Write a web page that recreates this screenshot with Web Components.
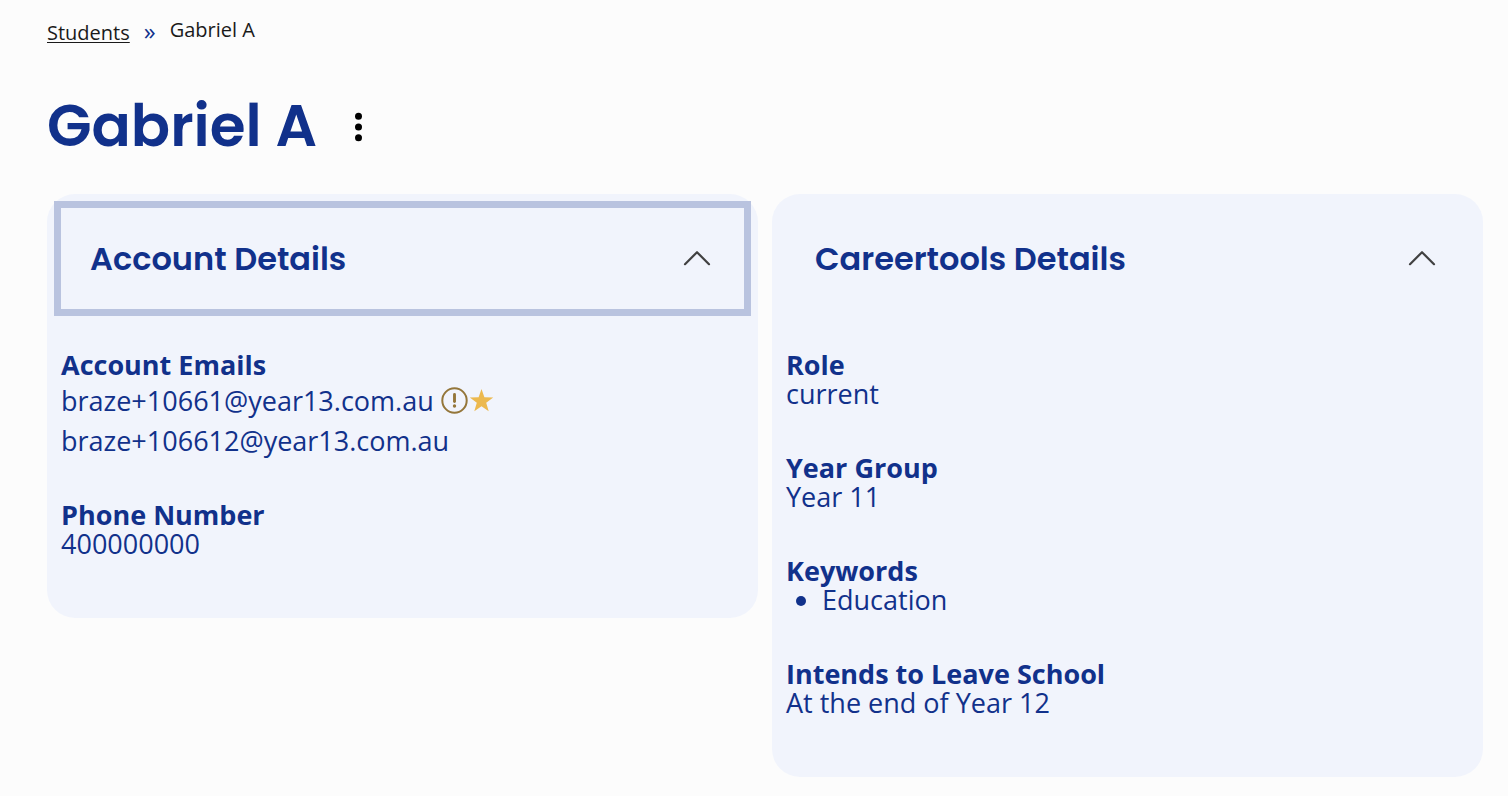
<!DOCTYPE html>
<html lang="en">
<head>
<meta charset="utf-8">
<meta name="viewport" content="width=device-width, initial-scale=1">
<title>Gabriel A</title>
<style>
	:root {
		--navy: #11318b;
		--ink: #1a1a1a;
		--page: #fcfcfc;
		--panel: #f1f4fc;
		--focus: #b9c3df;
		--heading-font: Poppins, Inter, sans-serif;
	}

	body {
		margin: 0;
		padding: 16px 25px 19px 47px;
		background: var(--page);
		color: var(--navy);
		font: 27px/29px "Open Sans", "Noto Sans", sans-serif;
	}

	main {
		display: grid;
		grid-template-columns: repeat(2, minmax(0, 1fr));
		align-items: start;
		gap: 14px;
	}
</style>
</head>
<body>
	<bread-crumbs current="Gabriel A">
		<a href="#students">Students</a>
	</bread-crumbs>

	<page-title>Gabriel A</page-title>

	<main>
		<detail-panel heading="Account Details" active>
			<detail-field label="Account Emails">
				<email-list>
					<email-item unverified primary>braze+10661@year13.com.au</email-item>
					<email-item>braze+106612@year13.com.au</email-item>
				</email-list>
			</detail-field>
			<detail-field label="Phone Number">400000000</detail-field>
		</detail-panel>

		<detail-panel heading="Careertools Details">
			<detail-field label="Role">current</detail-field>
			<detail-field label="Year Group">Year 11</detail-field>
			<detail-field label="Keywords">
				<keyword-list words="Education"></keyword-list>
			</detail-field>
			<detail-field label="Intends to Leave School">At the end of Year 12</detail-field>
		</detail-panel>
	</main>

<script>
(() => {
	const define = (name, template, setup) => {
		customElements.define(name,
			class extends HTMLElement {
				constructor() {
					super();
					this.attachShadow({ mode: 'open' });
					this.shadowRoot.innerHTML = template;
				}

				connectedCallback() {
					if (setup) {
						setup(this, this.shadowRoot);
					}
				}
			}
		);
	};

	define('bread-crumbs', `
		<style>
			:host { display: block; font-size: 20px; }
			ol {
				display: flex;
				align-items: flex-start;
				gap: 14px;
				margin: 0;
				padding: 0;
				list-style: none;
				line-height: 34px;
			}
			::slotted(a) {
				color: var(--ink);
				text-decoration-thickness: 1px;
				text-underline-offset: 2px;
			}
			.separator {
				color: var(--navy);
				font-size: 24px;
				font-weight: 500;
				line-height: 30px;
			}
			.current { color: var(--ink); line-height: 28px; }
		</style>
		<nav aria-label="Breadcrumb">
			<ol>
				<li><slot></slot></li>
				<li class="separator" aria-hidden="true">»</li>
				<li class="current" aria-current="page"></li>
			</ol>
		</nav>
	`, (host, root) => {
		root.querySelector('.current').textContent = host.getAttribute('current');
	});

	define('page-title', `
		<style>
			:host {
				display: flex;
				align-items: center;
				gap: 28px;
				padding: 32px 0 24px;
			}
			h1 {
				margin: 0;
				font: 600 58px/88px var(--heading-font);
			}
			button {
				display: flex;
				padding: 8px;
				border: 0;
				background: none;
				color: #000;
			}
		</style>
		<h1><slot></slot></h1>
		<button type="button" aria-label="More actions">
			<svg width="12" height="32" viewBox="0 0 12 32" fill="currentColor">
				<circle cx="5.5" cy="6.2" r="3.5"></circle>
				<circle cx="5.5" cy="17" r="3.5"></circle>
				<circle cx="5.5" cy="27.8" r="3.5"></circle>
			</svg>
		</button>
	`);

	define('detail-panel', `
		<style>
			:host {
				display: block;
				padding: 7px;
				border-radius: 28px;
				background: var(--panel);
			}
			h2 { margin: 0; }
			button {
				display: flex;
				align-items: center;
				justify-content: space-between;
				width: 100%;
				padding: 28px 33px 28px 29px;
				border: 7px solid transparent;
				background: none;
				color: inherit;
				font: 600 32px/45px var(--heading-font);
				text-align: left;
			}
			:host([active]) button { border-color: var(--focus); }
			svg { color: #414141; }
			.fields {
				display: flex;
				flex-direction: column;
				gap: 45px;
				padding: 34px 7px 53px;
			}
		</style>
		<h2>
			<button type="button" aria-expanded="true" aria-controls="fields">
				<span></span>
				<svg width="28" height="16" viewBox="0 0 28 16" fill="none" stroke="currentColor" stroke-width="2.2" stroke-linecap="round" stroke-linejoin="round">
					<polyline points="2 13.2 14 1.2 26 13.2"></polyline>
				</svg>
			</button>
		</h2>
		<div class="fields" id="fields"><slot></slot></div>
	`, (host, root) => {
		const button = root.querySelector('button');
		const fields = root.querySelector('.fields');
		root.querySelector('span').textContent = host.getAttribute('heading');

		button.onclick = () => {
			const open = button.getAttribute('aria-expanded') === 'true';
			button.setAttribute('aria-expanded', String(!open));
			fields.style.display = open ? 'none' : '';
		};
	});

	define('detail-field', `
		<style>
			:host { display: block; }
			dl, dd { margin: 0; }
			dt { font-weight: 700; }
		</style>
		<dl>
			<dt></dt>
			<dd><slot></slot></dd>
		</dl>
	`, (host, root) => {
		root.querySelector('dt').textContent = host.getAttribute('label');
	});

	define('email-list', `
		<style>
			:host {
				display: flex;
				flex-direction: column;
				gap: 11px;
				padding-top: 7px;
			}
		</style>
		<slot></slot>
	`);

	define('email-item', `
		<style>
			:host { display: flex; align-items: center; }
			svg { display: none; }
			:host([unverified]) .unverified { display: block; margin-left: 7px; }
			:host([primary]) .primary { display: block; }
		</style>
		<slot></slot>
		<svg class="unverified" role="img" aria-label="Unverified" width="27" height="27" viewBox="0 0 27 27" fill="none" stroke="#94763a" stroke-width="2">
			<circle cx="13.5" cy="13.5" r="12.2"></circle>
			<path d="M13.5 7.4v7.2" stroke-width="2.9" stroke-linecap="round"></path>
			<circle cx="13.5" cy="19" r="1.7" fill="#94763a" stroke="none"></circle>
		</svg>
		<svg class="primary" role="img" aria-label="Primary" width="27" height="27" viewBox="0 0 27 27" fill="#ecb94f">
			<polygon points="13.5 2 16.4 10.3 25.2 10.5 18.2 15.8 20.7 24.2 13.5 19.2 6.3 24.2 8.8 15.8 1.8 10.5 10.6 10.3"></polygon>
		</svg>
	`);

	define('keyword-list', `
		<style>
			:host { display: block; }
			ul { margin: 0; padding-left: 36px; }
		</style>
		<ul></ul>
	`, (host, root) => {
		root.querySelector('ul').innerHTML = host.getAttribute('words')
			.split(',')
			.map(word => `<li>${word}</li>`)
			.join('');
	});
})();
</script>
</body>
</html>
